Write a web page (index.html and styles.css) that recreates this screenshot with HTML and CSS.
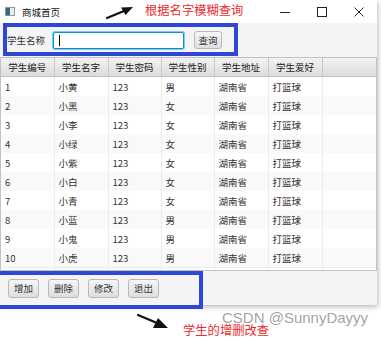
FILE: index.html
```html
<!DOCTYPE html>
<html lang="zh-CN">
<head>
    <meta charset="UTF-8">
    <meta name="viewport" content="width=device-width, initial-scale=1.0">
    <link rel="stylesheet" href="styles.css">
    <title>商城首页</title>
</head>
<body>
<div class="stage">
    <div class="window">
        <div class="titlebar">
            <svg class="app-icon" width="10" height="9" viewBox="0 0 10 9">
                <rect x="0.5" y="0.5" width="9" height="8" fill="#e8eef0" stroke="#8a9aa0"/>
                <rect x="1" y="1" width="4" height="7" fill="#2f6b70"/>
            </svg>
            <span class="title">商城首页</span>
            <div class="controls">
                <div class="ctrl">
                    <svg width="10" height="10" viewBox="0 0 10 10"><line x1="0" y1="5.5" x2="10" y2="5.5" stroke="#222" stroke-width="1"/></svg>
                </div>
                <div class="ctrl">
                    <svg width="10" height="10" viewBox="0 0 10 10"><rect x="0.5" y="0.5" width="9" height="9" fill="none" stroke="#222" stroke-width="1"/></svg>
                </div>
                <div class="ctrl">
                    <svg width="10" height="10" viewBox="0 0 10 10"><path d="M0.5 0.5 L9.5 9.5 M9.5 0.5 L0.5 9.5" stroke="#222" stroke-width="1"/></svg>
                </div>
            </div>
        </div>

        <div class="search-bar">
            <label class="search-label">学生名称</label>
            <div class="search-input"><span class="caret"></span></div>
            <button class="fx-btn query-btn">查询</button>
        </div>

        <div class="table-wrap">
            <table class="student-table">
                <colgroup>
                    <col style="width:53px"><col style="width:54px"><col style="width:53px">
                    <col style="width:53px"><col style="width:54px"><col style="width:54px"><col>
                </colgroup>
                <thead>
                    <tr>
                        <th>学生编号</th><th>学生名字</th><th>学生密码</th>
                        <th>学生性别</th><th>学生地址</th><th>学生爱好</th><th></th>
                    </tr>
                </thead>
                <tbody>
                    <tr><td>1</td><td>小黄</td><td>123</td><td>男</td><td>湖南省</td><td>打篮球</td><td></td></tr>
                    <tr><td>2</td><td>小黑</td><td>123</td><td>女</td><td>湖南省</td><td>打篮球</td><td></td></tr>
                    <tr><td>3</td><td>小李</td><td>123</td><td>女</td><td>湖南省</td><td>打篮球</td><td></td></tr>
                    <tr><td>4</td><td>小绿</td><td>123</td><td>女</td><td>湖南省</td><td>打篮球</td><td></td></tr>
                    <tr><td>5</td><td>小紫</td><td>123</td><td>女</td><td>湖南省</td><td>打篮球</td><td></td></tr>
                    <tr><td>6</td><td>小白</td><td>123</td><td>女</td><td>湖南省</td><td>打篮球</td><td></td></tr>
                    <tr><td>7</td><td>小青</td><td>123</td><td>女</td><td>湖南省</td><td>打篮球</td><td></td></tr>
                    <tr><td>8</td><td>小蓝</td><td>123</td><td>男</td><td>湖南省</td><td>打篮球</td><td></td></tr>
                    <tr><td>9</td><td>小鬼</td><td>123</td><td>男</td><td>湖南省</td><td>打篮球</td><td></td></tr>
                    <tr><td>10</td><td>小虎</td><td>123</td><td>男</td><td>湖南省</td><td>打篮球</td><td></td></tr>
                    <tr class="filler"><td></td><td></td><td></td><td></td><td></td><td></td><td></td></tr>
                </tbody>
            </table>
        </div>

        <div class="actions">
            <button class="fx-btn">增加</button>
            <button class="fx-btn">删除</button>
            <button class="fx-btn">修改</button>
            <button class="fx-btn">退出</button>
        </div>
    </div>

    <!-- annotations drawn over the screenshot -->
    <div class="mark mark-search"></div>
    <div class="mark mark-actions"></div>

    <svg class="arrow arrow-top" width="30" height="16" viewBox="0 0 30 16">
        <path d="M1 14 L18 7" stroke="#111" stroke-width="2.2" stroke-linecap="round"/>
        <path d="M27 3 L15 3.5 L19.5 11 Z" fill="#111"/>
    </svg>
    <div class="note note-top">根据名字模糊查询</div>

    <svg class="arrow arrow-bottom" width="34" height="18" viewBox="0 0 34 18">
        <path d="M1 2 L20 10" stroke="#111" stroke-width="2.2" stroke-linecap="round"/>
        <path d="M31 15 L16 15 L21 5 Z" fill="#111"/>
    </svg>
    <div class="note note-bottom">学生的增删改查</div>

    <div class="watermark">CSDN @SunnyDayyy</div>
</div>
</body>
</html>
```

FILE: styles.css
```css
body {
    margin: 0;
    background-color: #fff;
    font-family: "Noto Sans CJK SC", "Noto Sans", sans-serif;
    color: #333;
}

.stage {
    position: relative;
    width: 381px;
    height: 339px;
    overflow: hidden;
}

.window {
    width: 377px;
    height: 305px;
    background-color: #f4f4f4;
    box-shadow: 1px 2px 5px rgba(0, 0, 0, 0.28);
    display: flex;
    flex-direction: column;
}

.titlebar {
    height: 23px;
    background-color: #fff;
    display: flex;
    align-items: center;
    padding-left: 5px;
    flex-shrink: 0;
}

.app-icon {
    margin-right: 7px;
}

.title {
    font-size: 9.5px;
    color: #111;
}

.controls {
    margin-left: auto;
    display: flex;
    height: 100%;
}

.ctrl {
    width: 37px;
    display: flex;
    justify-content: center;
    align-items: center;
}

.search-bar {
    height: 34px;
    display: flex;
    align-items: center;
    padding-left: 7px;
    flex-shrink: 0;
}

.search-label {
    font-size: 9.5px;
    color: #333;
    width: 46px;
}

.search-input {
    width: 124px;
    height: 15px;
    background-color: #fff;
    border: 1px solid #0a93d1;
    box-shadow: 0 0 0 1px #7fcaec;
    border-radius: 2px;
    display: flex;
    align-items: center;
    padding-left: 5px;
}

.caret {
    width: 1px;
    height: 11px;
    background-color: #000;
}

.fx-btn {
    font-family: "Noto Sans CJK SC", "Noto Sans", sans-serif;
    font-size: 9.5px;
    color: #333;
    height: 19px;
    width: 31px;
    padding: 0;
    border: 1px solid #b9b9b9;
    border-radius: 3px;
    background: linear-gradient(#f6f6f6, #dedede);
    line-height: 17px;
}

.query-btn {
    width: 28px;
    height: 18px;
    margin-left: 10px;
}

.table-wrap {
    height: 214px;
    box-sizing: border-box;
    border: 1px solid #c2c2c2;
    background-color: #fff;
    overflow: hidden;
    flex-shrink: 0;
}

.student-table {
    width: 100%;
    height: 100%;
    border-collapse: collapse;
    table-layout: fixed;
    font-size: 9.5px;
}

.student-table th {
    height: 18px;
    padding: 0;
    font-weight: normal;
    color: #222;
    background: linear-gradient(#f2f2f2, #dcdcdc);
    border-right: 1px solid #c8c8c8;
    border-bottom: 1px solid #c2c2c2;
    text-align: center;
}

.student-table th:last-child {
    border-right: none;
}

.student-table td {
    height: 19px;
    padding: 0 0 0 4px;
    color: #333;
    border-right: 1px solid #ececec;
    white-space: nowrap;
}

.student-table td:last-child {
    border-right: none;
}

.student-table tbody tr:nth-child(even) {
    background-color: #f9f9f9;
}

.student-table tr.filler td {
    height: auto;
    background-color: #fff;
    border-top: 1px solid #ececec;
}

.actions {
    height: 34px;
    display: flex;
    align-items: center;
    gap: 9px;
    padding-left: 8px;
    flex-shrink: 0;
}

.mark {
    position: absolute;
    border: 4px solid #2f47d4;
    box-sizing: border-box;
}

.mark-search {
    left: 3px;
    top: 23px;
    width: 235px;
    height: 33px;
}

.mark-actions {
    left: -5px;
    top: 271px;
    width: 208px;
    height: 38px;
}

.arrow {
    position: absolute;
}

.arrow-top {
    left: 106px;
    top: 4px;
}

.arrow-bottom {
    left: 137px;
    top: 313px;
}

.note {
    position: absolute;
    color: #ec2a2f;
    font-size: 12.3px;
    line-height: 13px;
}

.note-top {
    left: 145px;
    top: 4px;
}

.note-bottom {
    left: 183px;
    top: 324px;
}

.watermark {
    position: absolute;
    left: 222px;
    top: 309px;
    font-family: "Liberation Sans", Arial, sans-serif;
    font-size: 15px;
    color: rgba(120, 120, 120, 0.7);
}
```
